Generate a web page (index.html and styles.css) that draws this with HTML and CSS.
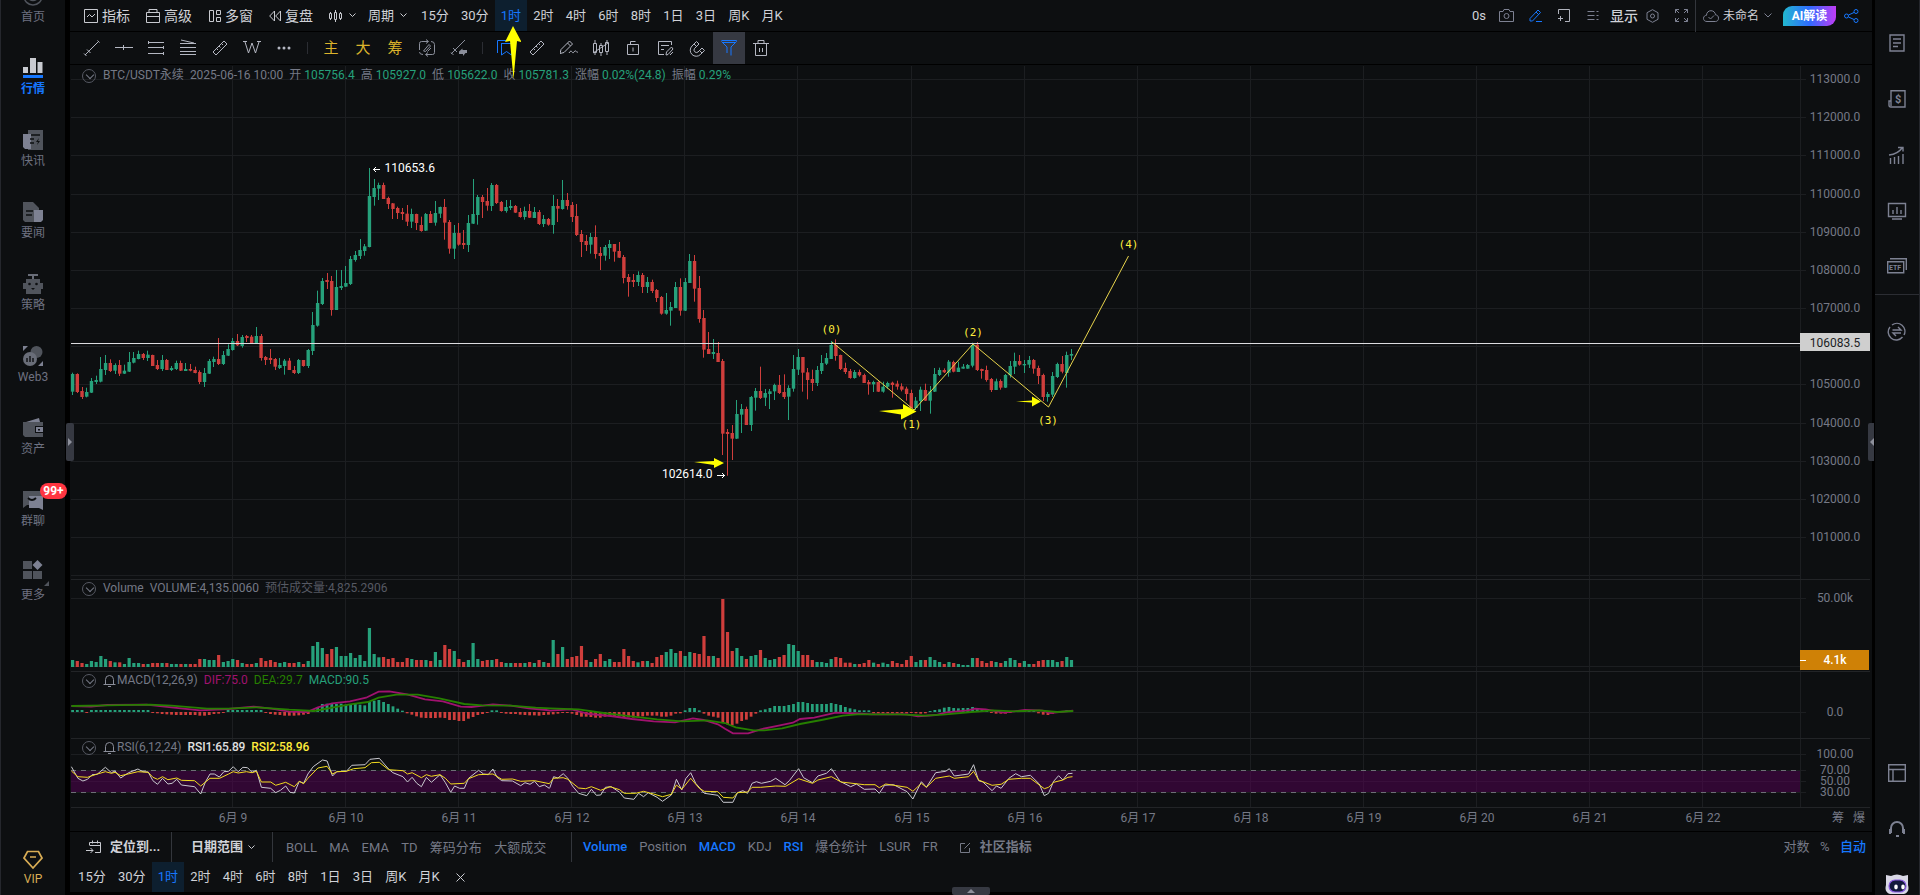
FILE: index.html
```html
<!doctype html>
<html lang="zh-CN">

<head>
    <meta charset="UTF-8">
    <title>BTC/USDT永续 1时</title>
    <link rel="stylesheet" href="styles.css">
</head>

<body>
    <div id="app">
        <!-- left menu -->
        <nav class="side">
            <a class="item home"><svg viewBox="0 0 20 20"><circle cx="10" cy="10" r="9" fill="none" stroke="#50545c" stroke-width="1.5"/><path d="M6 13q4 3 8 0" fill="none" stroke="#50545c" stroke-width="1.5"/></svg><span>首页</span></a>
            <a class="item on"><svg viewBox="0 0 20 20"><path fill="#c8cad0" d="M0 9h5v6H0zM7 0h6v15H7zM14.500 4h5v11h-5z"/><path fill="#1677ff" d="M0 17h20v3H0z"/></svg><span>行情</span></a>
            <a class="item"><svg viewBox="0 0 20 20"><path fill="#50545c" d="M5 0h15v20H5z"/><path fill="#7d8192" d="M0 4h8v15H2l-2-2z"/><path stroke="#0d0f11" stroke-width="1.500" d="M8 5h9M7 9h4M7 13h4"/><path fill="#0d0f11" d="M16 8l-3 4h2l-1 3 3-4h-2z"/></svg><span>快讯</span></a>
            <a class="item"><svg viewBox="0 0 20 20"><path fill="#50545c" d="M0 0h10l6 6v14H2l-2-2z"/><path stroke="#0d0f11" stroke-width="1.500" d="M3 9h7M3 13h6"/><path fill="#7d8192" d="M11 8h9v10l-2 2h-7z"/></svg><span>要闻</span></a>
            <a class="item"><svg viewBox="0 0 20 20"><path fill="#696d78" d="M5 0h10v2H5zM9 2h2v3H9z"/><path fill="#50545c" d="M3 5h14v4h3v6h-2v5H3v-5H0V9h3z"/><circle cx="6.500" cy="10" r="1.300" fill="#0d0f11"/><circle cx="13.500" cy="10" r="1.300" fill="#0d0f11"/><path d="M8 14h4l-2 2z" fill="#0d0f11"/></svg><span>策略</span></a>
            <a class="item"><svg viewBox="0 0 20 20"><circle cx="13.500" cy="6" r="6" fill="#50545c"/><circle cx="7" cy="13" r="7" fill="#696d78"/><path stroke="#0d0f11" stroke-width="1.400" d="M4 12v4M7 10v6M10 12v4"/><path fill="#7d8192" d="M0 0h5L0 5zM20 15v5h-5z"/></svg><span>Web3</span></a>
            <a class="item"><svg viewBox="0 0 20 20"><path fill="#7d8192" d="M3 4l13-4 1 4z"/><path fill="#50545c" d="M0 4h20v4h-8v7h8v4H2l-2-2z"/><path fill="#7d8192" d="M13 9h7v5h-7z"/><path fill="#0d0f11" d="M15 11h2v1.500h-2z"/></svg><span>资产</span></a>
            <a class="item"><svg viewBox="0 0 20 20"><path fill="#50545c" d="M0 1h20v14H4l-4 3z"/><path fill="#7d8192" d="M6 6h14v14l-4-2H6z"/><path d="M5 8q4 4 8 0" fill="none" stroke="#0d0f11" stroke-width="1.800"/></svg><span>群聊</span><b class="badge">99+</b></a>
            <a class="item more"><svg viewBox="0 0 20 20"><path fill="#50545c" d="M0 1h9v8H0zM0 11h9v8H0zM10 11h9v8h-9z"/><path fill="#7d8192" d="M14.500 0l5 5-5 5-5-5z"/></svg><span>更多</span><i class="corner"></i></a>
            <a class="item vip"><svg viewBox="0 0 20 20"><path d="M4.500 1.500h11L19 8l-9 10L1 8zM7 7h6" fill="none" stroke="#d9ad55" stroke-width="1.700"/></svg><span>VIP</span></a>
        </nav>

        <main class="main">
            <div class="topbar">
                <a class="tool t1"><svg width="14" height="14" viewBox="0 0 14 14"><path d="M.5.5h13v13H.5zM3 8l2.500-2.500L8 8l3-3"/></svg>指标</a>
                <a class="tool t2"><svg width="14" height="14" viewBox="0 0 14 14"><path d="M.5 3.500h13v10H.5zM3 3V.5h8V3M.5 7.500h13"/></svg>高级</a>
                <a class="tool t3"><svg width="12" height="12" viewBox="0 0 12 12"><path d="M.5.500h4v11h-4zM7.500.500h4v4h-4zM7.500 7.500h4v4h-4z"/></svg>多窗</a>
                <a class="tool t4"><svg width="12" height="12" viewBox="0 0 12 12"><path d="M5.500 1v10L.7 6zM11.500 1v10L6.700 6z"/></svg>复盘</a>
                <a class="tool t5"><svg width="13" height="14" viewBox="0 0 13 14"><path d="M.5 4.500h2v5h-2zM5.500 3.500h2v7h-2zM10.500 4.500h2v5h-2zM1.500 3v1.500M1.500 9.500V11M6.500 1v2.500M6.500 10.500V13M11.500 3v1.500M11.500 9.500V11"/></svg><svg class="chev" width="7" height="5" viewBox="0 0 7 5"><path d="M.5.500l3 3 3-3"/></svg></a>
                <a class="tool t6">周期<svg class="chev" width="7" height="5" viewBox="0 0 7 5"><path d="M.5.500l3 3 3-3"/></svg></a>
                <div class="periods">
                    <a>15分</a><a>30分</a><a class="on">1时</a><a>2时</a><a>4时</a><a>6时</a><a>8时</a><a>1日</a><a>3日</a><a>周K</a><a>月K</a>
                </div>
                <div class="right">
                    <span class="sec">0s</span>
                    <svg width="15" height="13" viewBox="0 0 15 13"><path d="M.5 2.500h3.500l1-2h5l1 2h3.500v10H.5z"/><circle cx="7.500" cy="7" r="2.500"/></svg>
                    <svg class="blue" width="13" height="13" viewBox="0 0 13 13"><path d="M1 9.500L9 1l2.500 2.500-8 8.500H1zM7 3l2.500 2.500M7 12.500h6"/></svg>
                    <svg class="lite" width="13" height="13" viewBox="0 0 13 13"><path d="M1.500 5V.500h11v12H8M1 9.500h5M3.500 7v5"/></svg>
                    <svg width="12" height="11" viewBox="0 0 12 11"><path d="M.5 1.500h7M9.500 1.500h2M.5 5.500h7M9.500 5.500h2M.5 9.500h7M9.500 9.500h2"/></svg>
                    <b class="show">显示</b>
                    <svg width="13" height="14" viewBox="0 0 13 14"><path d="M6.500.700l5.500 3v6.600l-5.500 3-5.500-3V3.700z"/><circle cx="6.500" cy="7" r="2"/></svg>
                    <svg class="expand" width="13" height="13" viewBox="0 0 13 13"><path d="M4 .5H.5V4M9 .5h3.500V4M.5 9v3.500H4M12.500 9v3.500H9M.5.500l3.500 3.500M12.500.500L9 4M.5 12.500L4 9M12.500 12.500L9 9"/></svg>
                    <i class="sep"></i>
                    <svg width="16" height="12" viewBox="0 0 16 12"><path d="M4 11.500C1.500 11.500.5 10 .5 8.300.5 6.500 2 5.300 3.500 5.300 3.500 2.500 5.500.700 8 .700s4.300 1.800 4.500 4.200c1.800 0 3 1.300 3 3.300s-1.300 3.300-3 3.300zM5.500 7l2 2 3.500-3.500"/></svg>
                    <span class="name">未命名</span>
                    <svg class="chev" width="8" height="5" viewBox="0 0 8 5"><path d="M.5.500L4 4 7.500.500"/></svg>
                    <b class="ai">AI解读</b>
                    <svg class="blue" width="15" height="14" viewBox="0 0 15 14"><circle cx="2.500" cy="7" r="2"/><circle cx="12" cy="2.500" r="2"/><circle cx="12" cy="11.500" r="2"/><path d="M4.500 6l5.500-2.500M4.500 8l5.500 2.500"/></svg>
                </div>
            </div>

            <div class="drawbar">
                <i><svg viewBox="0 0 18 18"><path d="M16 2L2 16M4 10.500l3.500 3.500M1 14.500L3.500 17M14.500 1.500l2 2"/></svg></i>
                <i><svg viewBox="0 0 18 18"><path d="M0 8.500h18M8.500 6v5"/></svg></i>
                <i><svg viewBox="0 0 18 18"><path d="M1 3.500h16M1 8.500h16M1 14.500h16M1.500 2v3M16.500 7v3M16.500 13v3"/></svg></i>
                <i><svg viewBox="0 0 18 18"><path d="M1 4.500h16M1 8.500h16M1 12.500h16M1 15.500h16M2 1l13 3"/></svg></i>
                <i><svg viewBox="0 0 18 18"><path d="M2 13L13 2l3 3L5 16zM8 7l1.500 1.500M10.500 4.500L12 6M5.500 9.500L7 11"/></svg></i>
                <i><svg viewBox="0 0 18 18"><path d="M2 3l3.500 11L9 4l3.500 10L16 3M0 2.500h4M14 2.500h4"/></svg></i>
                <i><svg viewBox="0 0 18 18"><g class="dots"><circle cx="4" cy="9" r="1.500"/><circle cx="9" cy="9" r="1.500"/><circle cx="14" cy="9" r="1.500"/></g></svg></i>
                <u></u>
                <i class="gold">主</i><i class="gold">大</i><i class="gold">筹</i>
                <i class="gray"><svg viewBox="0 0 18 18"><path d="M1.500 11V4.500q0-2 2-2H10M8 .500l2.500 2L8 4.500M13 2.500q3.500 0 3.500 3V12M16.500 12v1.500q0 2-2 2H8M10 13.500l-2.500 2 2.500 2M1.500 13q0 2.500 3.500 2.500M5.500 12l5.500-6.500 1.500 1.500-5 5.500zM9.500 12.500L13 9"/></svg></i>
                <i class="gray"><svg viewBox="0 0 18 18"><path d="M15 1L3 13M1 15l2-2M3 9l4 4M1 13.500L3.500 16"/><path class="fill" d="M9 12.500l3.500-3V11H17v3h-1.500L13 17v-2H9z"/></svg></i>
                <u class="short"></u>
                <i class="blue"><svg viewBox="0 0 18 18"><path d="M1.500 14V1.500H14M5 4.500h10.500V16l-5-3.500-5 3.500V4.500"/></svg></i>
                <i><svg viewBox="0 0 18 18"><path d="M2 13L13 2l3 3L5 16zM8 7l1.500 1.500M10.500 4.500L12 6M5.500 9.500L7 11"/></svg></i>
                <i><svg viewBox="0 0 18 18"><path d="M0 14.500l1-4L9.500 2l3 3L4 13.500zM7.500 4l3 3M9 14c3-5 3 2 5-1s2 1 4 0"/></svg></i>
                <i><svg viewBox="0 0 18 18"><path d="M1.500 4.500h3v9h-3zM7.500 6.500h3v7h-3zM13.500 3.500h3v9h-3zM3 1v3M3 14v2M9 4v2M9 14v3M15 1v2M15 13v3M1 14L16 4"/></svg></i>
                <i><svg viewBox="0 0 18 18"><path d="M3.500 5.500h11v10h-11zM6.500 5V2.500h5M9 8.500v4"/></svg></i>
                <i><svg viewBox="0 0 18 18"><path d="M15.500 6V2.500h-13v13H8M5 6.500h8M5 10.500h3M10 16l.5-3 5-5 1.500 2-5 5.500zM14 16l3-3"/></svg></i>
                <i><svg viewBox="0 0 18 18"><path d="M8.500 2.500L4 7a6 6 0 0 0 8.500 8.500L16.500 11.500l-2.500-2.500-4 4a2.500 2.500 0 0 1-3.500-3.500L11 5zM6 5l2.500 2.500M11.500 11.500L14 14"/></svg></i>
                <i class="blue active"><svg viewBox="0 0 18 18"><path d="M1.500 1.500h15v1L11 8v8.500M7 14V8L1.500 2.500M3 3.500h12"/></svg></i>
                <i><svg viewBox="0 0 18 18"><path d="M1 4.500h16M3.500 5v11.500h11V5M6 4V1.500h6V4M7.500 9v4M10.500 9v4"/></svg></i>
            </div>

            <div class="chart">
                <svg id="chart" width="1802" height="766" viewBox="70 65 1802 766"></svg>
                <div class="legend main-legend">
                    <em></em><span>BTC/USDT永续</span><span class="ml6">2025-06-16 10:00</span>
                    <span class="ml6">开</span><b>105756.4</b><span class="ml6">高</span><b>105927.0</b><span class="ml6">低</span><b>105622.0</b><span class="ml6">收</span><b>105781.3</b><span class="ml6">涨幅</span><b>0.02%(24.8)</b><span class="ml6">振幅</span><b>0.29%</b>
                </div>
                <div class="legend vol-legend"><em></em><span>Volume</span><span class="ml6">VOLUME:4,135.0060</span><span class="ml6 dim">预估成交量:4,825.2906</span></div>
                <div class="legend macd-legend"><em></em><svg width="13" height="13" viewBox="0 0 13 13"><path d="M.5 10.500h12M2.500 10V5.500a4 4 0 0 1 8 0V10M5 12.500h3"/></svg><span>MACD(12,26,9)</span><span class="ml6 dif">DIF:75.0</span><span class="ml6 dea">DEA:29.7</span><span class="ml6 up">MACD:90.5</span></div>
                <div class="legend rsi-legend"><em></em><svg width="13" height="13" viewBox="0 0 13 13"><path d="M.5 10.500h12M2.500 10V5.500a4 4 0 0 1 8 0V10M5 12.500h3"/></svg><span>RSI(6,12,24)</span><span class="ml6 r1">RSI1:65.89</span><span class="ml6 r2">RSI2:58.96</span></div>
            </div>

            <div class="indbar">
                <div class="locate"><svg width="16" height="14" viewBox="0 0 16 14"><path d="M3.500 5V2.500h11v10H9M3.500 5.500h11M6.500.500v3M11.500.500v3M0 10.500h7M4.500 8L7 10.500 4.500 13"/></svg>定位到...</div>
                <div class="range">日期范围<svg width="7" height="5" viewBox="0 0 7 5"><path d="M.5.500l3 3 3-3"/></svg></div>
                <div class="inds first"><a>BOLL</a><a>MA</a><a>EMA</a><a>TD</a><a>筹码分布</a><a>大额成交</a></div>
                <div class="inds second"><a class="on">Volume</a><a>Position</a><a class="on">MACD</a><a>KDJ</a><a class="on">RSI</a><a>爆仓统计</a><a>LSUR</a><a>FR</a></div>
                <div class="community"><svg width="11" height="11" viewBox="0 0 11 11"><path d="M5 1.500H.5v9h9V6M4.500 6.500L10 1"/></svg>社区指标</div>
                <div class="scale"><a>对数</a><a>%</a><a class="on">自动</a></div>
            </div>
            <div class="botbar">
                <div class="periods">
                    <a>15分</a><a>30分</a><a class="on">1时</a><a>2时</a><a>4时</a><a>6时</a><a>8时</a><a>1日</a><a>3日</a><a>周K</a><a>月K</a>
                </div>
                <svg width="9" height="9" viewBox="0 0 9 9"><path d="M.5.500l8 8M8.500.500l-8 8"/></svg>
            </div>
        </main>

        <!-- right menu -->
        <aside class="rail">
            <div class="cell"><svg viewBox="0 0 20 20"><path d="M3 2h14v16H3zM6 6h8M6 10h8M6 13.500h5"/></svg></div>
            <div class="cell"><svg viewBox="0 0 20 20"><path d="M4 1.700h14v16.300H4q-2 0-2-2v-4h2zM4 12v5"/><text class="usd" x="8" y="14">$</text></svg></div>
            <div class="cell"><svg viewBox="0 0 20 20"><path d="M3.500 13v6M7.500 12v7M11.500 11v8M16 9v10M2 10q9-1 13-7M11 2.500h5v4"/></svg></div>
            <div class="cell"><svg viewBox="0 0 20 20"><path d="M1.500 2.500h17v13h-17zM6 9v4M10 6v7M14 9v4M5 18h10"/></svg></div>
            <div class="cell line"><svg viewBox="0 0 20 20"><path d="M.7 4.700h16v11h-16zM3 1.700h16.300V13"/><text x="2" y="12.500">ETF</text></svg></div>
            <div class="cell ring"><svg viewBox="0 0 20 20"><path d="M5 4a8 8 0 0 1 12 10M15.500 16A8 8 0 0 1 3 6M5.500 9H14l-3-3M14 12H6l3 3"/></svg></div>
            <div class="cell panel"><svg viewBox="0 0 20 20"><path d="M1.700 1.700h16.600v16.600H1.700zM2 6.500h16M6 7v11"/></svg></div>
            <div class="cell"><svg viewBox="0 0 20 20"><path d="M4 14V9a6 6 0 0 1 12 0v5M3 10v5M17 10v5M9 17h3" stroke-width="2"/></svg></div>
            <div class="cell bot"><svg viewBox="0 0 24 24"><path fill="#d9d8e6" stroke="none" d="M1 2l5 1q6-3 12 0l5-1v10q2 7-4 9H5Q-1 19 1 12z"/><rect x="4" y="7" width="17" height="12" rx="6" fill="#131a3d" stroke="#8a5ce0" stroke-width="1.200"/><ellipse cx="11" cy="14" rx="1.800" ry="2.400" fill="#fff" stroke="none"/><ellipse cx="18" cy="14" rx="1.800" ry="2.400" fill="#fff" stroke="none"/></svg></div>
        </aside>
    </div>

    <!-- panel handles -->
    <div class="handle h-left"></div>
    <div class="handle h-right"></div>
    <div class="handle h-bottom"></div>
    <svg class="mark" width="16" height="54" viewBox="0 0 16 54"><path d="M8 0l8.500 16-4.500-1L8.500 53 5 15 0 16z"/></svg>

    <script src="chart.js"></script>
</body>

</html>
```
FILE: styles.css
```css
* {
    margin: 0;
    padding: 0;
    box-sizing: border-box;
}

body {
    width: 1920px;
    height: 895px;
    overflow: hidden;
    background: #000;
    color: #d0d2d8;
    font: 13px/16px Roboto, "Noto Sans CJK SC", sans-serif;
    position: relative;
}

svg {
    display: block;
    flex: none;
}

i,
em {
    font-style: normal;
}

#app {
    display: flex;
    height: 895px;
}

/* left menu */
.side {
    width: 65px;
    border-left: 1px solid #25272d;
    background: #0d0f11;
    display: flex;
    flex-direction: column;
}

.side .item {
    height: 72px;
    display: flex;
    flex-direction: column;
    align-items: center;
    position: relative;
    font-size: 12px;
    color: #6d7180;
    white-space: nowrap;
}

.side .item svg {
    width: 20px;
    height: 20px;
    margin-bottom: 3px;
}

.side .home {
    margin-top: -14px;
}

.side .on {
    color: #1677ff;
    font-weight: bold;
}

.side .more {
    margin-top: -2px;
}

.side .more svg {
    margin-bottom: 7px;
}

.side .vip {
    margin-top: auto;
    height: 45px;
    color: #d9ad55;
}

.side .vip svg {
    margin-bottom: 1px;
}

.badge {
    position: absolute;
    left: 39px;
    top: -7px;
    width: 27px;
    height: 16px;
    border-radius: 8px;
    background: #ff3541;
    color: #fff;
    font-size: 12px;
    line-height: 16px;
    text-align: center;
}

.corner {
    position: absolute;
    left: 43px;
    top: 21px;
    border-left: 5px solid transparent;
    border-bottom: 5px solid #50545c;
}

/* center */
.main {
    width: 1802px;
    margin-left: 5px;
}

.topbar {
    height: 31px;
    display: flex;
    align-items: center;
    background: #0d0f11;
    padding-left: 14px;
}

.topbar svg,
.drawbar svg,
.legend svg,
.indbar svg,
.botbar svg {
    fill: none;
    stroke: #c8cad0;
}

.drawbar svg {
    stroke: #b4b7c2;
}

.tool {
    display: flex;
    align-items: center;
    font-size: 14px;
    color: #d0d2d8;
}

.tool svg {
    margin-right: 4px;
}

.tool .chev {
    margin: 0;
}

.t1 { width: 62px; }
.t2 { width: 63px; }
.t3 { width: 60px; }
.t4 { width: 60px; }
.t5 { width: 39px; }
.t6 { width: 47px; font-size: 13px; }

.t5 svg {
    margin-right: 7px;
}

.t6 .chev {
    margin-left: 6px;
}

.periods {
    display: flex;
    height: 31px;
    line-height: 31px;
    font-size: 13px;
}

.periods a {
    padding: 0 6.1px;
    white-space: nowrap;
}

.periods .on {
    color: #1677ff;
    background: #0d1f2f;
}

.topbar .right {
    height: 31px;
    margin-left: auto;
    margin-right: 13px;
    display: flex;
    align-items: center;
}

.right svg {
    stroke: #7d8192;
    margin-right: 15px;
}

.right .blue,
.drawbar .blue svg {
    stroke: #1677ff;
}

.right .sec {
    margin-right: 13px;
}

.right .lite {
    stroke: #b0b3bd;
    margin-right: 17px;
}

.right .show {
    font-size: 14px;
    font-weight: 500;
    margin-left: -4px;
    margin-right: 8px;
}

.right .expand {
    margin: 0 7px 0 1px;
}

.right .sep {
    width: 1px;
    height: 32px;
    background: #33363c;
    margin-right: 7px;
}

.right .sep + svg {
    margin-right: 4px;
}

.right .name {
    font-size: 12px;
    margin-right: 5px;
}

.right .chev {
    margin-right: 11px;
}

.right .ai {
    width: 53px;
    height: 20px;
    margin-right: 8px;
    border-radius: 9px 0 9px 0;
    background: linear-gradient(90deg, #22b8cf, #2f6bff 50%, #c03cf5);
    color: #fff;
    font-size: 12px;
    line-height: 20px;
    text-align: center;
}

.right .ai + svg {
    margin: 0;
}

.drawbar {
    height: 32px;
    margin-top: 1px;
    padding-left: 6px;
    display: flex;
    background: #0d0f11;
}

.drawbar i {
    width: 32px;
    height: 32px;
    display: flex;
    align-items: center;
    justify-content: center;
}

.drawbar svg {
    width: 18px;
    height: 18px;
}

.drawbar .dots {
    fill: #b4b7c2;
    stroke: none;
}

.drawbar .gray svg {
    stroke: #8b8f9b;
}

.drawbar .fill {
    fill: #8b8f9b;
    stroke: none;
}

.drawbar .gold {
    color: #dcb32c;
    font-size: 15px;
}

.drawbar .active {
    background: #363942;
}

.drawbar u {
    width: 1px;
    height: 12px;
    margin: 10px 7px;
    background: #2b2d33;
}

.drawbar .short {
    margin: 10px 6px 10px 7px;
}

/* chart */
.chart {
    height: 766px;
    margin-top: 1px;
    position: relative;
    background: #0d0f11;
}

#chart text {
    font-family: Roboto, "Noto Sans CJK SC", sans-serif;
    font-size: 12px;
    fill: #757986;
}

#chart .white {
    fill: #fff;
}

#chart .wave {
    font-family: "DejaVu Sans Mono", monospace;
    font-size: 11px;
    fill: #ffee3c;
}

.legend {
    position: absolute;
    left: 12px;
    height: 16px;
    display: flex;
    align-items: center;
    font-size: 12px;
    color: #757986;
    white-space: nowrap;
}

.main-legend { top: 2px; }
.vol-legend { top: 515px; }
.macd-legend { top: 607px; }
.rsi-legend { top: 674px; }

.legend em {
    width: 14px;
    height: 14px;
    border: 1px solid #565963;
    border-radius: 50%;
    margin: 1px 7px 0 0;
}

.legend em::before {
    content: "";
    display: block;
    width: 5px;
    height: 5px;
    margin: 2px 0 0 3.500px;
    border: solid #757986;
    border-width: 0 1px 1px 0;
    transform: rotate(45deg);
}

.legend svg {
    stroke: #8a8d99;
    margin-right: 1px;
}

.legend b {
    font-weight: normal;
    color: #26a17b;
    margin-left: 3px;
}

.ml6 { margin-left: 6px; }
.dim { color: #565963; }
.dif { color: #a0126f; }
.dea { color: #267f00; }
.up { color: #26a17b; }

.r1,
.r2 {
    color: #e0e0e0;
    font-weight: 500;
    letter-spacing: -.1px;
}

.r2 {
    color: #ffeb3b;
}

/* bottom bars */
.indbar {
    height: 30px;
    margin-top: 1px;
    display: flex;
    align-items: center;
    background: #0d0f11;
    color: #757986;
    white-space: nowrap;
}

.locate,
.range {
    height: 30px;
    display: flex;
    align-items: center;
    border-right: 1px solid #33363c;
    color: #d0d2d8;
    font-weight: bold;
}

.locate {
    width: 102px;
    padding-left: 16px;
}

.locate svg {
    margin-right: 8px;
}

.range {
    width: 101px;
    padding-left: 19px;
}

.range svg {
    margin-left: 5px;
}

.inds {
    display: flex;
    gap: 12.3px;
}

.inds.first {
    width: 299px;
    height: 30px;
    padding-left: 13px;
    line-height: 31px;
    border-right: 1px solid #33363c;
}

.inds.second {
    margin-left: 11px;
    gap: 12px;
}

.indbar .on {
    color: #1677ff;
    font-weight: 500;
}

.community {
    margin-left: 22px;
    display: flex;
    align-items: center;
    font-weight: bold;
}

.community svg {
    stroke: #757986;
    margin-right: 9px;
}

.scale {
    margin-left: auto;
    margin-right: 6px;
    display: flex;
    gap: 10.5px;
}

.botbar {
    height: 30px;
    display: flex;
    align-items: center;
    padding-left: 2px;
    background: #0d0f11;
}

.botbar svg {
    margin-left: 10px;
}

.botbar .periods {
    height: 30px;
    line-height: 29px;
}

/* right menu */
.rail {
    width: 45px;
    margin-left: 3px;
    padding-top: 15px;
    border-right: 1px solid #25272d;
    background: #0d0f11;
    display: flex;
    flex-direction: column;
}

.rail .cell {
    height: 56px;
    flex: none;
    display: flex;
    align-items: center;
    justify-content: center;
}

.rail svg {
    width: 20px;
    height: 20px;
    fill: none;
    stroke: #7d8192;
    stroke-width: 1.4;
}

.rail text {
    font: bold 7px Roboto, sans-serif;
    fill: #7d8192;
    stroke: none;
}

.rail .usd {
    font-size: 11px;
}

.rail .line {
    border-bottom: 1px solid #2b2d33;
    height: 57px;
    margin-bottom: 8px;
    margin-top: -1px;
}

.rail .line svg {
    margin-top: 1px;
}

.rail .panel {
    margin-top: auto;
}

.rail .bot {
    height: 38px;
    align-items: flex-start;
}

.rail .bot svg {
    width: 24px;
    height: 24px;
    margin-top: 16px;
}

/* handles */
.handle {
    position: absolute;
    background: #363942;
}

.handle::before {
    content: "";
    position: absolute;
    border: 4px solid transparent;
}

.h-left {
    left: 66px;
    top: 423px;
    width: 8px;
    height: 38px;
    border-radius: 2px;
}

.h-left::before {
    left: 2px;
    top: 15px;
    border-left-color: #8d909b;
    border-right-width: 0;
}

.h-right {
    left: 1868px;
    top: 423px;
    width: 6px;
    height: 38px;
    border-radius: 2px 0 0 2px;
}

.h-right::before {
    left: 2px;
    top: 15px;
    border-right-color: #8d909b;
    border-left-width: 0;
}

.h-bottom {
    left: 952px;
    top: 887px;
    width: 38px;
    height: 8px;
    border-radius: 2px;
}

.h-bottom::before {
    left: 15px;
    top: 2px;
    border-bottom-color: #8d909b;
    border-top-width: 0;
}

.mark {
    position: absolute;
    left: 505px;
    top: 26px;
    fill: #ff0;
}
```
FILE: chart.js
```js
var NS = "http://www.w3.org/2000/svg";
var root = document.getElementById("chart");
var UP = "#26a17b";
var DOWN = "#cf3e3c";
var GRID = "#1c1e21";
var STEP = 4.7117;

function el(name, attrs, text) {
    var n = document.createElementNS(NS, name);
    for (var k in attrs) {
        n.setAttribute(k, attrs[k]);
    }
    if (text) {
        n.textContent = text;
    }
    root.appendChild(n);
    return n;
}

function rect(x, y, w, h, fill) {
    return el("rect", { x: x, y: y, width: w, height: h, fill: fill });
}

function cx(i) {
    return 72.6 + STEP * i;
}

// u/d, high, top, bottom, low - thirds of a pixel below y = 150
var early = "u668 672 725 735,d670 672 726 729,d711 723 741 747,u713 726 740 742,u684 693 728 729,u677 690 696 702,u621 657 695 697,u615 639 660 675,d628 639 663 666,u640 645 662 672,d630 645 671 678,u644 662 671 672,u606 636 665 666,u606 624 638 640,u602 612 627 628,d609 612 624 630,u602 614 624 633,d614 615 648 648,d630 645 657 660,u615 630 657 663,d627 630 660 660,u648 654 660 663,u632 639 657 660,d632 639 662 663,u639 657 663 663,d642 657 662 664,d650 660 669 670,d661 666 696 702,u654 669 696 711,u627 633 671 672,u620 627 636 651,d564 627 642 645,u603 615 642 645,u583 597 617 618,u564 573 600 602,d552 573 586 588,u555 561 588 593,d555 558 564 576,d555 560 580 580,u531 558 579 579,d552 558 624 632,d618 621 630 645,d597 624 630 642,d624 627 650 660,u624 645 654 657,u627 632 648 674,d624 632 660 660,d648 660 669 672,u627 630 669 672,d630 630 648 650,u597 600 648 654,u486 525 603 615,u422 459 527 530,u384 393 462 465,d369 390 396 417,d378 393 480 497,u360 411 480 480,u360 408 414 420,u348 399 410 411,u318 327 402 405,u303 315 330 335,u267 300 318 327,u282 289 303 317,u54 138 291 292,u87 114 141 167,u98 105 116 150,d98 105 147 147,d140 144 162 177,d159 160 177 207,d170 174 189 207,d174 186 192 210,d165 191 215 228,u176 192 215 234,d191 192 219 240,d200 225 243 245,u189 192 242 243,d183 192 219 219,u153 189 218 227,u170 171 191 204,d147 171 218 269,d210 216 296 311,u225 249 296 327,"
    + "d219 249 284 287,d240 279 285 297,u195 219 285 306,u87 192 221 222,u135 141 195 224,d135 141 156 204,d114 153 167 182,u99 105 168 183,d102 105 159 162,d153 156 183 185,u150 171 183 188,u150 168 174 180,d165 168 188 189,d174 186 201 203,u170 183 201 209,d162 183 203 204,u171 186 204 204,d180 186 222 225,u195 207 222 231,d204 207 224 227,u135 168 225 251,d147 168 176 216,u90 150 177 179,d129 150 168 179,d156 165 201 216,d162 198 255 258,d240 252 276 321,d255 273 285 303,u249 261 284 311,d226 261 312 326,d291 309 318 360,u285 291 317 332,u270 282 294 327,d282 282 305 335,d276 303 323 324,d315 321 384 400,d372 381 396 440,d372 390 396 411,u364 375 396 408,d369 375 411 429,u381 396 411 429,d389 396 423 429,d417 420 444 456,d438 441 491 494,u429 480 491 494,u456 471 482 527,u396 411 474 474,d385 411 482 497,u384 396 482 483,u312 333 399 399,d315 333 416 455,d378 414 507 518,d480 504 599 623,d546 597 612 612,u567 606 612 627,d576 609 636 636,d627 633 851 915,d837 846 852 977,d825 849 866 930,u750 792 866 867,u762 777 794 849,d770 777 825 825,u738 741 825 843,u714 723 743 782,d650 723 744 747,u717 729 743 768,u717 724 732 777,u701 705 724 750,d675 705 729 732,d673 726 741 747,u706 714 740 810,u615 657 716 725,u597 621 659 675,d621 621 668 725,d654 667 690 748,d659 687 699 723,u648 660 699 708,u615 639 663 672,u609 624 641 645,u573 585 627 627,d568 585 618 632";
// same, below y = 220
var late = "d404 405 447 450,d428 444 456 462,d447 453 474 476,u450 456 474 476,d449 456 466 470,d461 465 489 489,d480 486 493 524,u482 486 493 516,d484 486 515 516,u485 500 515 518,u485 489 500 506,d485 488 495 533,d482 491 500 509,d490 499 509 514,d500 506 522 542,d509 519 564 564,u531 542 564 570,u500 509 543 573,d491 510 542 543,u498 514 542 581,u444 462 515 516,u443 450 465 468,d445 450 457 459,u420 425 458 470,d422 426 455 457,u425 443 456 456,u432 440 446 446,u432 435 446 446,u368 375 437 442,d366 374 450 453,d446 447 453 476,d437 450 480 485,d474 477 510 516,u476 484 510 510,d478 483 503 509,u462 465 503 504,u423 438 466 473,u398 423 440 462,d405 423 434 437,u420 432 436 459,u408 420 434 444,d417 420 446 461,d437 444 468 492,d461 465 531 543,u516 522 531 545,u456 468 524 531,u428 432 471 474,d408 432 455 460,u395 405 459 503,u387 402 407 420";

function parse(str, base) {
    return str.split(",").map(function(s) {
        var v = s.slice(1).split(" ").map(function(n) {
            return base + n / 3;
        });
        return { color: s[0] == "u" ? UP : DOWN, high: v[0], top: v[1], bottom: v[2], low: v[3] };
    });
}
var candles = parse(early, 150).concat(parse(late, 220));

var volume = [21,18,12,9,18,15,33,24,18,14,14,9,27,12,12,9,9,12,12,12,12,9,9,9,9,9,9,24,24,21,21,36,15,18,24,21,12,9,9,12,27,18,21,15,12,15,12,12,15,9,18,63,75,57,39,54,60,33,33,42,27,36,18,117,39,29,30,24,27,15,15,27,24,21,21,21,18,45,21,66,54,48,24,15,21,72,24,18,21,21,24,15,12,12,12,12,12,15,12,21,15,12,
    81,39,60,24,30,33,63,21,15,24,39,18,24,15,15,54,33,18,14,18,18,12,30,36,45,54,42,48,33,45,42,39,93,33,33,27,204,105,48,57,33,24,33,36,51,27,21,24,30,36,69,66,48,36,36,21,15,15,12,24,30,27,13,13,9,9,12,21,13,9,13,9,18,12,9,21,33,15,21,21,30,21,15,9,15,12,9,6,6,27,27,18,12,18,15,12,18,27,21,12,18,9,9,18,21,21,21,15,18,30,21];
var hist = [6,6,6,-3,6,6,6,6,6,6,6,6,6,6,6,6,6,-3,-4,-6,-7,-8,-9,-9,-9,-9,-9,-11,-11,-9,-6,-5,-3,6,6,6,6,6,6,6,6,-3,-6,-8,-9,-11,-11,-11,-10,-8,-6,6,15,24,25,25,24,25,22,24,24,22,20,30,34,36,30,24,17,10,4,-4,-8,-13,-17,-18,-18,-18,-17,-18,-24,-24,-27,-27,-20,-15,-9,-6,-3,5,5,-3,-5,-6,-6,-8,-9,-10,-10,-11,-9,-8,
    -7,-5,-3,-3,-5,-9,-14,-14,-15,-17,-17,-14,-13,-14,-13,-15,-16,-17,-14,-13,-11,-11,-11,-14,-14,-11,-5,-4,5,12,12,5,-5,-11,-14,-17,-33,-37,-40,-35,-27,-23,-14,-5,5,8,12,18,18,18,21,24,30,30,27,24,24,24,24,27,24,21,15,11,8,5,5,5,-4,-4,-4,-4,-4,-4,-4,-4,-3,-4,-5,-4,3,6,8,13,15,12,11,12,12,15,12,8,5,-3,-5,-5,-5,-3,3,3,5,3,3,-4,-8,-9,-5,-3,3,5,6];

// grid
for (var d = 0; d < 14; d++) {
    var gx = Math.floor(232.7 + 113.05 * d);
    rect(gx, 66, 1, 741, GRID);
    el("text", { x: gx + 1, y: 822, "text-anchor": "middle" }, "6月 " + (9 + d));
}
rect(1800, 66, 1, 741, GRID);
[79, 117, 155, 194, 232, 270, 308, 346, 384, 423, 461, 499, 537, 575].forEach(function(y, n) {
    rect(71, y, n == 13 ? 1729 : 1735, 1, GRID);
    if (n != 7 && n < 13) {
        el("text", { x: 1835, y: y + 4, "text-anchor": "middle" }, (113 - n) + "000.0");
    }
});
[579, 671, 738, 807].forEach(function(y) {
    rect(71, y, 1799, 1, "#222427");
});
[[598, "50.00k"], [712, "0.0"], [754, "100.00"], [770, "70.00"], [781, "50.00"], [792, "30.00"]].forEach(function(a) {
    rect(71, a[0], 1735, 1, GRID);
    el("text", { x: 1835, y: a[0] + 4, "text-anchor": "middle" }, a[1]);
});
rect(71, 666, 1729, 1, GRID);
el("text", { x: 1832, y: 822 }, "筹");
el("text", { x: 1853, y: 822 }, "爆");

// candles, volume, macd bars
candles.forEach(function(c, i) {
    var x = cx(i);
    rect(Math.floor(x), c.high, 1, c.low - c.high, c.color);
    rect(x - 1.7, c.top, 3.4, c.bottom - c.top, c.color);
    rect(x - 1.6, 667 - volume[i] / 3, 3.2, volume[i] / 3, c.color);
    var h = hist[i] / 3;
    rect(x - 1.4, h > 0 ? 712 - h : 712, 2.8, Math.abs(h), h > 0 ? UP : DOWN);
});

// points come in two halves, x in 1/2.8 px and y in 1/3 px
function curve(a, b, color, width) {
    function conv(s, dx, dy) {
        return s.split(" ").map(function(p) {
            var v = p.split(",");
            return (dx + v[0] / 2.8).toFixed(1) + "," + (dy + v[1] / 3).toFixed(1);
        }).join(" ");
    }
    el("polyline", { points: conv(a, 0, 570) + " " + conv(b, 550, 560), fill: "none", stroke: color, "stroke-width": width });
}
curve("200,408 255,410 300,405 410,404 480,412 560,421 640,417 710,410 760,416 810,425 860,426 890,412 930,400 980,394 1025,383 1060,365 1090,364 1140,373 1190,388 1240,394 1290,410 1320,411 1380,403 1430,407 1480,415 1530,420",
    "0,452 60,448 110,462 170,468 230,477 290,484 350,487 400,475 430,480 470,493 490,506 512,520 555,520 590,508 640,497 680,488 700,477 740,473 800,458 860,460 900,463 1000,463 1030,469 1080,465 1110,457 1170,451 1190,446 1220,448 1270,458 1330,450 1380,452 1400,459 1465,452", "#a0126f", 1.8);
curve("200,408 300,406 420,404 480,407 580,416 640,416 720,412 810,419 880,423 930,413 980,403 1030,396 1060,383 1110,374 1170,374 1230,385 1300,402 1350,406 1430,407 1500,413",
    "0,445 80,448 150,459 210,467 300,478 370,484 440,481 490,489 520,502 570,511 600,511 650,505 700,492 760,480 820,467 860,463 980,463 1050,467 1100,464 1180,456 1240,451 1300,454 1370,451 1420,456 1465,453", "#267f00", 1.8);

// rsi
rect(71, 771, 1729, 21, "rgba(86, 0, 86, .5)");
[770.5, 792.5].forEach(function(y) {
    el("path", { d: "M71 " + y + "H1800", stroke: "#6c6e75", "stroke-dasharray": "5 5" });
});
curve("200,590 218,625 232,633 245,628 258,614 272,613 295,592 312,608 322,603 338,624 360,608 386,597 400,605 415,606 428,632 441,643 455,625 470,642 482,640 495,628 508,645 545,650 562,672 575,636 588,612 600,612 614,621 627,605 640,604 653,590 667,605 680,592 693,593 706,607 718,601 732,652 758,655 772,668 785,661 800,648 812,667 824,669 838,634 850,640 862,612 877,590 903,570 916,573 931,618 943,605 970,604 985,586 1022,584 1036,568 1062,565 1088,597 1100,608 1128,620 1141,636 1154,622 1167,640 1180,650 1194,622 1208,637 1232,614 1247,638 1262,667 1273,648 1287,655 1300,655 1312,625 1340,601 1354,612 1367,614 1380,597 1392,622 1405,632 1435,633 1458,647 1470,638 1484,643 1497,634 1510,650 1524,645 1538,655",
    "0,682 10,650 22,654 37,641 50,655 63,678 80,700 103,707 116,688 130,706 142,705 155,682 172,680 195,697 208,714 235,718 248,700 262,710 275,698 300,712 315,724 340,705 354,658 369,690 380,656 394,638 408,670 432,700 470,706 485,727 512,727 525,698 540,692 553,700 566,670 578,665 592,670 618,664 632,655 658,674 670,662 696,626 710,653 735,668 750,648 774,640 788,626 812,664 842,680 858,672 880,688 910,687 922,700 937,676 962,674 1000,695 1016,717 1040,665 1054,682 1080,638 1108,634 1118,626 1132,648 1172,642 1186,614 1200,662 1212,666 1238,692 1250,678 1263,685 1285,655 1304,641 1320,650 1345,646 1370,672 1384,707 1396,700 1410,664 1424,647 1436,660 1450,641 1463,640", "#c9c9cf", 1);
curve("200,603 218,620 245,622 270,613 295,605 312,610 322,607 338,617 386,605 415,607 428,622 441,628 455,620 470,629 495,624 508,631 545,632 562,648 588,625 615,625 640,612 653,605 667,609 690,605 706,608 718,604 732,636 758,636 772,646 800,637 824,650 838,634 850,641 862,625 890,594 916,589 931,612 943,605 970,604 990,596 1022,593 1040,578 1062,577 1088,599 1128,602 1141,612 1154,608 1180,623 1194,614 1208,619 1232,614 1247,625 1262,642 1300,640 1312,626 1340,614 1380,612 1405,628 1435,627 1458,634 1497,632 1538,641",
    "0,668 10,655 37,653 50,658 80,684 100,686 116,680 142,691 168,680 195,689 208,700 240,700 262,694 290,702 315,710 340,703 354,675 369,688 394,655 418,685 432,694 470,695 485,712 512,714 525,698 553,696 566,682 590,682 632,678 660,679 696,656 735,670 750,660 788,650 815,666 880,674 910,674 922,683 940,672 1000,682 1016,694 1040,670 1054,682 1080,655 1118,648 1132,655 1172,650 1186,634 1200,660 1238,676 1263,673 1285,658 1320,655 1345,655 1384,686 1396,682 1410,667 1436,660 1450,652 1463,650", "#f2dc1f", 1);

// last price line and tags
rect(71, 343, 1729, 1, "#dcdce0");
rect(1800, 333, 70, 18, "#cfcfcf");
el("text", { x: 1835, y: 347, "text-anchor": "middle", style: "fill:#1c1e24" }, "106083.5");
rect(1800, 650, 69, 20, "#cf8106");
rect(1800, 660, 6, 1, "#fff");
el("text", { x: 1835, y: 664, "text-anchor": "middle", "font-weight": 500, "class": "white" }, "4.1k");

// high / low marks
el("path", { d: "M373 169.500h7M376 167l-2.500 2.500 2.500 2.500M717 475.500h8M722 473l2.500 2.500-2.500 2.500", stroke: "#fff", fill: "none" });
el("text", { x: 384.5, y: 172, "class": "white" }, "110653.6");
el("text", { x: 662, y: 478, "class": "white" }, "102614.0");

// wave drawing
el("polyline", { points: "832,342 914,410 973,344 1048.500,407 1128.500,256", fill: "none", stroke: "#e8d44c", "stroke-width": 1 });
[[831.5, 333, 0], [911.5, 428, 1], [973, 336, 2], [1048, 424, 3], [1128.5, 248, 4]].forEach(function(w) {
    el("text", { x: w[0], y: w[1], "text-anchor": "middle", "class": "wave" }, "(" + w[2] + ")");
});
el("path", { d: "M694 462l20-1v-3l10 5-10 5v-3zM879 411l24-2v-5l13.500 7.500-15.500 8v-5zM1016 401.500l16-1v-4l9 5-9 5v-4z", fill: "#ff0" });
```
